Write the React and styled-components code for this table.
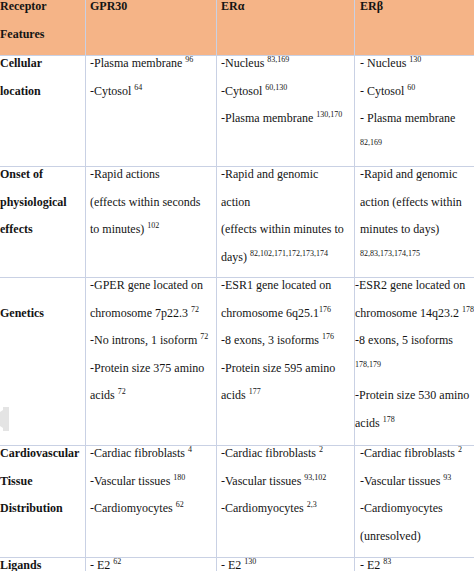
import React from "react";
import styled, { createGlobalStyle } from "styled-components";

const Global = createGlobalStyle`
  html, body { margin: 0; padding: 0; background: #fff; }
  body { overflow: hidden; width: 474px; height: 571px; }
`;

const Table = styled.div`
  position: relative;
  display: grid;
  grid-template-columns: 85px 130px 137px 119px;
  grid-template-rows: 55px 110px 110px 167px 111px 40px;
  gap: 1px;
  background: #c9d1e4;
  width: 474px;
  height: 571px;
  overflow: hidden;
  font-family: "Liberation Serif", "Times New Roman", serif;
  font-size: 12px;
  color: #141414;
`;

const Cell = styled.div`
  background: ${(p) => (p.$head ? "#f5b487" : "#ffffff")};
  padding-left: ${(p) => p.$pad}px;
  min-width: 0;
`;

const Lines = styled.div`
  margin-top: ${(p) => p.$shift}px;
  line-height: 27.6px;
  white-space: nowrap;
`;

const Line = styled.div`
  font-weight: ${(p) => (p.$bold ? 700 : 400)};
  height: 27.6px;
`;

const Sup = styled.sup`
  font-size: 8px;
  vertical-align: 5px;
  line-height: 0;
`;

const Speaker = styled.svg`
  position: absolute;
  left: 0;
  top: 407px;
  width: 9px;
  height: 24px;
`;

const PADS = [0, 4, 4, 5];

const rows = [
  {
    head: true,
    cells: [
      [["Receptor"], ["Features"]],
      [["GPR30"]],
      [["ERα"]],
      [["ERβ"]],
    ],
  },
  {
    cells: [
      [["Cellular"], ["location"]],
      [["-Plasma membrane ", "96"], ["-Cytosol ", "64"]],
      [
        ["-Nucleus ", "83,169"],
        ["-Cytosol ", "60,130"],
        ["-Plasma membrane ", "130,170"],
      ],
      [
        ["- Nucleus ", "130"],
        ["- Cytosol ", "60"],
        ["- Plasma membrane"],
        ["", "82,169"],
      ],
    ],
  },
  {
    cells: [
      [["Onset of"], ["physiological"], ["effects"]],
      [["-Rapid actions"], ["(effects within seconds"], ["to minutes) ", "102"]],
      [
        ["-Rapid and genomic"],
        ["action"],
        ["(effects within minutes to"],
        ["days) ", "82,102,171,172,173,174"],
      ],
      [
        ["-Rapid and genomic"],
        ["action (effects within"],
        ["minutes to days)"],
        ["", "82,83,173,174,175"],
      ],
    ],
  },
  {
    pads: [0, 4, 4, 0],
    cells: [
      [[""], ["Genetics"]],
      [
        ["-GPER gene located on"],
        ["chromosome 7p22.3 ", "72"],
        ["-No introns, 1 isoform ", "72"],
        ["-Protein size 375 amino"],
        ["acids ", "72"],
      ],
      [
        ["-ESR1 gene located on"],
        ["chromosome 6q25.1", "176"],
        ["-8 exons, 3 isoforms ", "176"],
        ["-Protein size 595 amino"],
        ["acids ", "177"],
      ],
      [
        ["-ESR2 gene located on"],
        ["chromosome 14q23.2 ", "178"],
        ["-8 exons, 5 isoforms"],
        ["", "178,179"],
        ["-Protein size 530 amino"],
        ["acids ", "178"],
      ],
    ],
  },
  {
    cells: [
      [["Cardiovascular"], ["Tissue"], ["Distribution"]],
      [
        ["-Cardiac fibroblasts ", "4"],
        ["-Vascular tissues ", "180"],
        ["-Cardiomyocytes ", "62"],
      ],
      [
        ["-Cardiac fibroblasts ", "2"],
        ["-Vascular tissues ", "93,102"],
        ["-Cardiomyocytes ", "2,3"],
      ],
      [
        ["-Cardiac fibroblasts ", "2"],
        ["-Vascular tissues ", "93"],
        ["-Cardiomyocytes"],
        ["(unresolved)"],
      ],
    ],
  },
  {
    cells: [[["Ligands"]], [["- E2 ", "62"]], [["- E2 ", "130"]], [["- E2 ", "83"]]],
  },
];

export default function App() {
  return (
    <>
      <Global />
      <Table>
        {rows.map((row, ri) =>
          row.cells.map((lines, ci) => (
            <Cell
              key={`${ri}-${ci}`}
              $head={row.head}
              $pad={(row.pads || PADS)[ci]}
            >
              <Lines $shift={row.head ? -7 : -6}>
                {lines.map(([text, sup], li) => (
                  <Line key={li} $bold={row.head || ci === 0}>
                    {text}
                    {sup && <Sup>{sup}</Sup>}
                  </Line>
                ))}
              </Lines>
            </Cell>
          ))
        )}
        <Speaker viewBox="0 0 9 24">
          <polygon points="0,5 3,3 3,0 9,0 9,24 3,24 3,21 0,19" fill="#e4e4e4" />
        </Speaker>
      </Table>
    </>
  );
}
